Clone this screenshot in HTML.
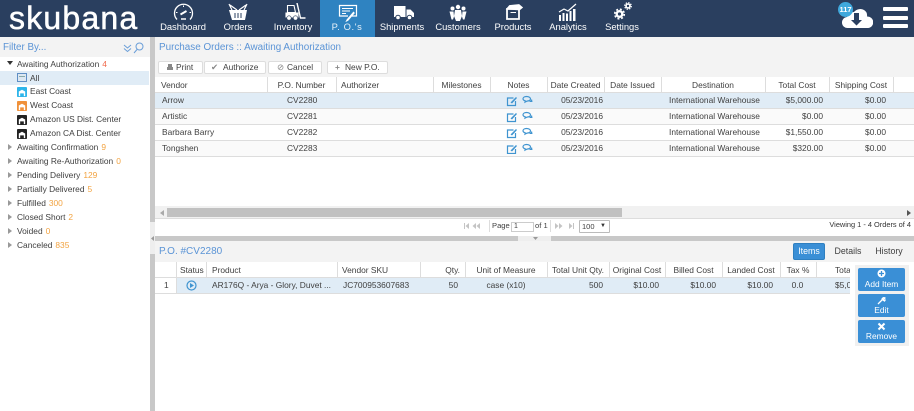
<!DOCTYPE html>
<html><head><meta charset="utf-8"><style>
html,body{margin:0;padding:0;width:914px;height:411px;overflow:hidden;background:#fff}
body{font-family:"Liberation Sans",sans-serif;font-size:8.4px;color:#404040;position:relative}
.a,.t,.c,.r,svg{position:absolute}
.t,.c,.r{white-space:nowrap;line-height:12px;height:12px}
.c{text-align:center}.r{text-align:right}
.nav{color:#fff;font-size:9.4px;text-align:center;width:60px;top:21px;position:absolute;line-height:12px}
.cnt{color:#f2a341;margin-left:3px}
.btn{position:absolute;top:61px;height:11px;background:#fff;border:1px solid #ddd;border-radius:2px;line-height:11px;color:#404040;white-space:nowrap}
.btn span{position:absolute}
.w{fill:#fff}
.act{position:absolute;left:858px;width:47px;height:23px;background:#3a8fd6;border-radius:2px;color:#fff;text-align:center;font-size:8.4px;line-height:10px}
.s{position:absolute;width:1px;background:#ddd}
</style></head><body>
<div class="a" style="left:0;top:0;width:914px;height:37px;background:#2a3f5f"></div>
<div class="t" style="left:9px;top:-2px;height:40px;line-height:40px;font-size:32px;color:#fff;letter-spacing:1.2px;-webkit-text-stroke:.5px #fff">skubana</div>
<div class="a" style="left:320px;top:0;width:55px;height:37px;background:#2f83c1"></div>

<svg style="left:173px;top:3px" width="21" height="18" viewBox="0 0 21 18" fill="none" stroke="#fff" stroke-width="1.3"><path d="M4 16.500A9 9 0 1 1 17 16.500"/><path d="M7.500 11.500l6-3.500" stroke-width="1.900"/><path d="M10.500 2.500v1.500M3 9.500h1.500M18 9.500h-1.500" stroke-width="1"/><path d="M8 16h5" stroke-width="1.500"/></svg>
<svg style="left:227px;top:3px" width="22" height="18" viewBox="0 0 22 18"><path d="M2 7h18l-2 10H5z" fill="#fff"/><path d="M5 7L2 1M17 7l3-6M3 2l7 5M19 2l-7 5" stroke="#fff" stroke-width="1.200" fill="none"/><path d="M8 10v5M11 10v5M14 10v5" stroke="#2a3f5f" stroke-width="1"/></svg>
<svg style="left:285px;top:3px" width="21" height="18" viewBox="0 0 21 18" fill="none" stroke="#fff" stroke-width="1.100"><path d="M2.500 2.500h6.500l1.500 7H2.500z"/><path d="M12 0l3.500 15h5" stroke-width="1.400"/><path d="M1 10h12v4H1z" fill="#fff"/><circle cx="4" cy="15" r="2.200" fill="#fff" stroke="#2a3f5f" stroke-width=".6"/><circle cx="10.500" cy="15" r="2.200" fill="#fff" stroke="#2a3f5f" stroke-width=".6"/></svg>
<svg style="left:338px;top:4px" width="20" height="18" viewBox="0 0 20 18" fill="none" stroke="#fff"><path d="M10 12H1.500V1.500h17V12H14" stroke-width="1.200"/><path d="M4 4.500h11M4 7h8M4 9.500h4" stroke-width="1"/><path d="M15.500 8L9 15.500l-1 2 2-1L16.500 9z" fill="#fff" stroke-width=".6"/></svg>
<svg style="left:394px;top:6px" width="20" height="14" viewBox="0 0 20 14"><path d="M0 0h11.500v11H0z" fill="#fff"/><path d="M12.500 3.500h4l3.500 3.500v4h-7.500z" fill="#fff"/><circle cx="4" cy="11.500" r="2.300" fill="#fff" stroke="#2a3f5f"/><circle cx="15.500" cy="11.500" r="2.300" fill="#fff" stroke="#2a3f5f"/></svg>
<svg style="left:449px;top:4px" width="18" height="17" viewBox="0 0 18 17" class="w"><circle cx="9" cy="3" r="2.200"/><circle cx="3.500" cy="4.500" r="2"/><circle cx="14.500" cy="4.500" r="2"/><path d="M6 6h6l1 6-2 5H7l-2-5zM.5 7.500h4l.5 5-1 3H2.500zM17.500 7.500h-4l-.5 5 1 3h1.500z"/></svg>
<svg style="left:504px;top:4px" width="20" height="16" viewBox="0 0 20 16" fill="none" stroke="#fff"><path d="M3 5h12v10H3z" stroke-width="1.800"/><path d="M2.500 5l3-3.500 9.500-1 3.500 3-3 2.500z" fill="#fff" stroke-width=".8"/><path d="M6.500 8.500h5.500" stroke-width="1"/></svg>
<svg style="left:558px;top:2px" width="20" height="19" viewBox="0 0 20 19"><path d="M1 10l5-3 4 2 8-7" fill="none" stroke="#fff" stroke-width="1.200"/><path d="M1 13h2v6H1zM4.500 11h2v8h-2zM8 11.500h2V19H8zM11.500 9h2v10h-2zM15 7h2.500v12H15z" class="w"/></svg>
<svg style="left:614px;top:1px" width="19" height="20" viewBox="0 0 19 20" fill="none" stroke="#fff"><circle cx="5.500" cy="13" r="2.800" stroke-width="2.400"/><circle cx="5.500" cy="13" r="4.800" stroke-width="1.600" stroke-dasharray="2 1.800"/><circle cx="14" cy="5" r="2" stroke-width="1.600"/><circle cx="14" cy="5" r="3.300" stroke-width="1.200" stroke-dasharray="1.400 1.200"/></svg>

<div class="nav" style="left:153px">Dashboard</div>
<div class="nav" style="left:208px">Orders</div>
<div class="nav" style="left:263px">Inventory</div>
<div class="nav" style="left:317px;letter-spacing:.6px;color:#e8f1f8">P. O.'s</div>
<div class="nav" style="left:372px">Shipments</div>
<div class="nav" style="left:428px">Customers</div>
<div class="nav" style="left:483px">Products</div>
<div class="nav" style="left:538px">Analytics</div>
<div class="nav" style="left:592px">Settings</div>

<svg style="left:842px;top:7px" width="31" height="22" viewBox="0 0 31 22"><path d="M6 21a5.500 5.500 0 0 1-1-11 7 7 0 0 1 7-5 8 8 0 0 1 10-2 6.500 6.500 0 0 1 3 6.500 5.500 5.500 0 0 1 1 11.500z" fill="#fff"/><path d="M12 6h5v7h3l-5.500 5.500L9 13h3z" fill="#2a3f5f"/></svg>
<div class="a" style="left:838px;top:2px;width:15px;height:15px;border-radius:8px;background:#3fa8dc;color:#fff;font-size:7.5px;line-height:15px;text-align:center;font-weight:bold">117</div>
<div class="a" style="left:883px;top:7px;width:25px;height:4px;background:#fff;border-radius:1px"></div>
<div class="a" style="left:883px;top:16px;width:25px;height:4px;background:#fff;border-radius:1px"></div>
<div class="a" style="left:883px;top:24px;width:25px;height:4px;background:#fff;border-radius:1px"></div>

<!-- sidebar -->
<div class="a" style="left:0;top:37px;width:150px;height:20px;background:#f3f3f3"></div>
<div class="t" style="left:3px;top:42px;color:#5b94d6;font-size:9.8px">Filter By...</div>
<svg style="left:123px;top:42px" width="22" height="12" viewBox="0 0 22 12" fill="none" stroke="#6a9ed8"><path d="M1 3l3.500 3L8 3M1 6.500l3.500 3L8 6.500"/><circle cx="16.500" cy="4.500" r="3.500"/><path d="M14 7.500L11 11"/></svg>
<div class="a" style="left:0;top:71px;width:149px;height:14px;background:#e0ecf6"></div>
<svg style="left:7px;top:61px" width="6" height="5" viewBox="0 0 6 5"><path d="M0 0h6L3 4z" fill="#333"/></svg>
<div class="t" style="left:17px;top:58px">Awaiting Authorization<span class="cnt" style="color:#f0684a">4</span></div>
<div class="a" style="left:17px;top:73px;width:8px;height:7px;border:1px solid #5f8fc5;background:#dde8f2"></div>
<div class="a" style="left:19px;top:76px;width:6px;height:1px;background:#8aa"></div>
<div class="t" style="left:30px;top:72px">All</div>
<svg style="left:17px;top:87px" width="10" height="10" viewBox="0 0 11 11"><rect width="11" height="11" rx="1" fill="#2db5ea"/><path d="M2 10V5l3.500-2L9 5v5H7.500V7h-4v3z" fill="#fff"/></svg>
<div class="t" style="left:30px;top:85px">East Coast</div>
<svg style="left:17px;top:101px" width="10" height="10" viewBox="0 0 11 11"><rect width="11" height="11" rx="1" fill="#f0913a"/><path d="M2 10V5l3.500-2L9 5v5H7.500V7h-4v3z" fill="#fff"/></svg>
<div class="t" style="left:30px;top:99px">West Coast</div>
<svg style="left:17px;top:115px" width="10" height="10" viewBox="0 0 11 11"><rect width="11" height="11" rx="1" fill="#222"/><path d="M2 10V5l3.500-2L9 5v5H7.500V7h-4v3z" fill="#fff"/></svg>
<div class="t" style="left:30px;top:113px">Amazon US Dist. Center</div>
<svg style="left:17px;top:129px" width="10" height="10" viewBox="0 0 11 11"><rect width="11" height="11" rx="1" fill="#222"/><path d="M2 10V5l3.500-2L9 5v5H7.500V7h-4v3z" fill="#fff"/></svg>
<div class="t" style="left:30px;top:127px">Amazon CA Dist. Center</div>

<svg style="left:8px;top:144px" width="4" height="6" viewBox="0 0 4 6"><path d="M0 0l4 3-4 3z" fill="#999"/></svg><div class="t" style="left:17px;top:141px">Awaiting Confirmation<span class="cnt">9</span></div>
<svg style="left:8px;top:158px" width="4" height="6" viewBox="0 0 4 6"><path d="M0 0l4 3-4 3z" fill="#999"/></svg><div class="t" style="left:17px;top:155px">Awaiting Re-Authorization<span class="cnt">0</span></div>
<svg style="left:8px;top:172px" width="4" height="6" viewBox="0 0 4 6"><path d="M0 0l4 3-4 3z" fill="#999"/></svg><div class="t" style="left:17px;top:169px">Pending Delivery<span class="cnt">129</span></div>
<svg style="left:8px;top:186px" width="4" height="6" viewBox="0 0 4 6"><path d="M0 0l4 3-4 3z" fill="#999"/></svg><div class="t" style="left:17px;top:183px">Partially Delivered<span class="cnt">5</span></div>
<svg style="left:8px;top:200px" width="4" height="6" viewBox="0 0 4 6"><path d="M0 0l4 3-4 3z" fill="#999"/></svg><div class="t" style="left:17px;top:197px">Fulfilled<span class="cnt">300</span></div>
<svg style="left:8px;top:214px" width="4" height="6" viewBox="0 0 4 6"><path d="M0 0l4 3-4 3z" fill="#999"/></svg><div class="t" style="left:17px;top:211px">Closed Short<span class="cnt">2</span></div>
<svg style="left:8px;top:228px" width="4" height="6" viewBox="0 0 4 6"><path d="M0 0l4 3-4 3z" fill="#999"/></svg><div class="t" style="left:17px;top:225px">Voided<span class="cnt">0</span></div>
<svg style="left:8px;top:242px" width="4" height="6" viewBox="0 0 4 6"><path d="M0 0l4 3-4 3z" fill="#999"/></svg><div class="t" style="left:17px;top:239px">Canceled<span class="cnt">835</span></div>

<div class="a" style="left:150px;top:37px;width:5px;height:374px;background:#c8c8c8"></div>
<div class="a" style="left:150px;top:222px;width:5px;height:32px;background:#eee"></div>
<svg style="left:151px;top:236px" width="3" height="5" viewBox="0 0 3 5"><path d="M3 0L0 2.500 3 5z" fill="#999"/></svg>

<!-- top panel -->
<div class="a" style="left:155px;top:37px;width:759px;height:40px;background:#f3f3f3"></div>
<div class="t" style="left:159px;top:42px;color:#5b94d6;font-size:9.9px">Purchase Orders :: Awaiting Authorization</div>
<div class="btn" style="left:158px;width:43px"><svg style="left:8px;top:2px" width="6" height="7" viewBox="0 0 6 7"><path d="M1 0h4v3H1zM0 3h6v3H0z" fill="#888"/></svg><span style="left:17px">Print</span></div>
<div class="btn" style="left:204px;width:60px"><span style="left:6px;color:#888">&#10004;</span><span style="left:18px">Authorize</span></div>
<div class="btn" style="left:268px;width:52px"><span style="left:8px;color:#888">&#8856;</span><span style="left:18px">Cancel</span></div>
<div class="btn" style="left:327px;width:59px"><span style="left:7px;color:#888;font-weight:bold">+</span><span style="left:17px">New P.O.</span></div>

<div class="a" style="left:155px;top:77px;width:759px;height:129px;background:#fff"></div>
<div class="a" style="left:155px;top:92px;width:759px;height:1px;background:#ddd"></div>
<div class="a" style="left:155px;top:93px;width:759px;height:15px;background:#e0ecf6"></div>
<div class="a" style="left:155px;top:108px;width:759px;height:1px;background:#ddd"></div>
<div class="a" style="left:155px;top:109px;width:759px;height:15px;background:#fafafa"></div>
<div class="a" style="left:155px;top:124px;width:759px;height:1px;background:#ddd"></div>
<div class="a" style="left:155px;top:140px;width:759px;height:1px;background:#ddd"></div>
<div class="a" style="left:155px;top:141px;width:759px;height:15px;background:#fafafa"></div>
<div class="a" style="left:155px;top:156px;width:759px;height:1px;background:#ddd"></div>
<div class="s" style="left:267px;top:77px;height:15px"></div><div class="s" style="left:336px;top:77px;height:15px"></div><div class="s" style="left:433px;top:77px;height:15px"></div><div class="s" style="left:490px;top:77px;height:15px"></div><div class="s" style="left:547px;top:77px;height:15px"></div><div class="s" style="left:604px;top:77px;height:15px"></div><div class="s" style="left:661px;top:77px;height:15px"></div><div class="s" style="left:765px;top:77px;height:15px"></div><div class="s" style="left:829px;top:77px;height:15px"></div><div class="s" style="left:893px;top:77px;height:15px"></div>

<div class="t" style="left:161px;top:79px">Vendor</div>
<div class="c" style="left:267px;width:69px;top:79px">P.O. Number</div>
<div class="t" style="left:341px;top:79px">Authorizer</div>
<div class="c" style="left:433px;width:57px;top:79px">Milestones</div>
<div class="c" style="left:490px;width:57px;top:79px">Notes</div>
<div class="c" style="left:547px;width:57px;top:79px">Date Created</div>
<div class="c" style="left:604px;width:57px;top:79px">Date Issued</div>
<div class="c" style="left:661px;width:104px;top:79px">Destination</div>
<div class="c" style="left:765px;width:64px;top:79px">Total Cost</div>
<div class="c" style="left:829px;width:64px;top:79px">Shipping Cost</div>

<div class="t" style="left:162px;top:94px">Arrow</div><div class="t" style="left:287px;top:94px">CV2280</div><div class="r" style="left:547px;width:56px;top:94px">05/23/2016</div><div class="t" style="left:669px;top:94px">International Warehouse</div><div class="r" style="left:765px;width:58px;top:94px">$5,000.00</div><div class="r" style="left:829px;width:57px;top:94px">$0.00</div>
<div class="t" style="left:162px;top:110px">Artistic</div><div class="t" style="left:287px;top:110px">CV2281</div><div class="r" style="left:547px;width:56px;top:110px">05/23/2016</div><div class="t" style="left:669px;top:110px">International Warehouse</div><div class="r" style="left:765px;width:58px;top:110px">$0.00</div><div class="r" style="left:829px;width:57px;top:110px">$0.00</div>
<div class="t" style="left:162px;top:126px">Barbara Barry</div><div class="t" style="left:287px;top:126px">CV2282</div><div class="r" style="left:547px;width:56px;top:126px">05/23/2016</div><div class="t" style="left:669px;top:126px">International Warehouse</div><div class="r" style="left:765px;width:58px;top:126px">$1,550.00</div><div class="r" style="left:829px;width:57px;top:126px">$0.00</div>
<div class="t" style="left:162px;top:142px">Tongshen</div><div class="t" style="left:287px;top:142px">CV2283</div><div class="r" style="left:547px;width:56px;top:142px">05/23/2016</div><div class="t" style="left:669px;top:142px">International Warehouse</div><div class="r" style="left:765px;width:58px;top:142px">$320.00</div><div class="r" style="left:829px;width:57px;top:142px">$0.00</div>

<svg style="left:506px;top:94px" width="28" height="60" viewBox="0 0 28 60" fill="none" stroke="#3f94d0">
<g><path d="M7.500 4H1.500v7.500h8V7" stroke-width="1.200"/><path d="M4.500 8.500L10 3l1 1-5 5.500z" fill="#3f94d0" stroke="none"/><path d="M20.500 2.500c2.500 0 4 1.100 4 2.300s-1.400 2.200-3.500 2.300l-2 1 .3-1.200c-1.400-.4-2.300-1.200-2.300-2.100 0-1.200 1.300-2.300 3.500-2.300z" stroke-width="1.200"/><path d="M23 8h3.500l-.5-3z" fill="#3f94d0" stroke="none"/></g>
<g transform="translate(0,16)"><path d="M7.500 4H1.500v7.500h8V7" stroke-width="1.200"/><path d="M4.500 8.500L10 3l1 1-5 5.500z" fill="#3f94d0" stroke="none"/><path d="M20.500 2.500c2.500 0 4 1.100 4 2.300s-1.400 2.200-3.500 2.300l-2 1 .3-1.200c-1.400-.4-2.300-1.200-2.300-2.100 0-1.200 1.300-2.300 3.500-2.300z" stroke-width="1.200"/><path d="M23 8h3.500l-.5-3z" fill="#3f94d0" stroke="none"/></g>
<g transform="translate(0,32)"><path d="M7.500 4H1.500v7.500h8V7" stroke-width="1.200"/><path d="M4.500 8.500L10 3l1 1-5 5.500z" fill="#3f94d0" stroke="none"/><path d="M20.500 2.500c2.500 0 4 1.100 4 2.300s-1.400 2.200-3.500 2.300l-2 1 .3-1.200c-1.400-.4-2.300-1.200-2.300-2.100 0-1.200 1.300-2.300 3.500-2.300z" stroke-width="1.200"/><path d="M23 8h3.500l-.5-3z" fill="#3f94d0" stroke="none"/></g>
<g transform="translate(0,48)"><path d="M7.500 4H1.500v7.500h8V7" stroke-width="1.200"/><path d="M4.500 8.500L10 3l1 1-5 5.500z" fill="#3f94d0" stroke="none"/><path d="M20.500 2.500c2.500 0 4 1.100 4 2.300s-1.400 2.200-3.500 2.300l-2 1 .3-1.200c-1.400-.4-2.300-1.200-2.300-2.100 0-1.200 1.300-2.300 3.500-2.300z" stroke-width="1.200"/><path d="M23 8h3.500l-.5-3z" fill="#3f94d0" stroke="none"/></g>
</svg>

<!-- scrollbar -->
<div class="a" style="left:155px;top:206px;width:759px;height:12px;background:#f1f1f1"></div>
<div class="a" style="left:167px;top:208px;width:455px;height:9px;background:#c1c1c1"></div>
<svg style="left:160px;top:210px" width="4" height="6" viewBox="0 0 4 6"><path d="M4 0L0 3l4 3z" fill="#aaa"/></svg>
<svg style="left:907px;top:210px" width="4" height="6" viewBox="0 0 4 6"><path d="M0 0l4 3-4 3z" fill="#555"/></svg>
<div class="a" style="left:155px;top:218px;width:759px;height:1px;background:#ddd"></div>

<!-- pager -->
<div class="a" style="left:155px;top:219px;width:759px;height:17px;background:#fff"></div>
<svg style="left:464px;top:223px" width="20" height="6" viewBox="0 0 20 6" fill="#c4c4c4"><path d="M0 0h1v6H0zM5 0v6L1.500 3zM12 0v6L8.500 3zM16 0v6l-3.500-3z"/></svg>
<div class="a" style="left:489px;top:220px;width:1px;height:12px;background:#ddd"></div>
<div class="t" style="left:492px;top:220px;font-size:7.6px">Page</div>
<div class="a" style="left:511px;top:222px;width:19px;height:8px;border:1px solid #ccc;font-size:7px;line-height:8px;padding-left:2px">1</div>
<div class="t" style="left:535px;top:220px;font-size:7.6px">of 1</div>
<div class="a" style="left:550px;top:220px;width:1px;height:12px;background:#ddd"></div>
<svg style="left:555px;top:223px" width="20" height="6" viewBox="0 0 20 6" fill="#c4c4c4"><path d="M0 0v6l3.500-3zM4 0v6l3.500-3zM14 0v6l3.500-3zM18 0h1v6h-1z"/></svg>
<div class="a" style="left:579px;top:220px;width:27px;height:11px;border:1px solid #bbb;border-radius:1px;font-size:7.5px;line-height:11px;padding-left:2px">100<span style="position:absolute;right:3px;font-size:6px;color:#333">&#9660;</span></div>
<div class="r" style="left:780px;width:131px;top:219px;color:#333;font-size:7.4px">Viewing 1 - 4 Orders of 4</div>

<!-- splitter -->
<div class="a" style="left:155px;top:236px;width:759px;height:5px;background:#c8c8c8"></div>
<div class="a" style="left:518px;top:236px;width:33px;height:5px;background:#eee"></div>
<svg style="left:533px;top:237px" width="5" height="3" viewBox="0 0 5 3"><path d="M0 0h5L2.500 3z" fill="#999"/></svg>

<!-- lower -->
<div class="a" style="left:155px;top:241px;width:759px;height:21px;background:#f3f3f3"></div>
<div class="t" style="left:159px;top:246px;color:#5b94d6;font-size:10px">P.O. #CV2280</div>
<div class="a" style="left:793px;top:243px;width:32px;height:17px;background:#3a8fd6;border:1px solid #2e7fc0;box-sizing:border-box;border-radius:2px;color:#fff;font-size:8.8px;line-height:15px;text-align:center">Items</div>
<div class="c" style="left:829px;width:38px;top:245px;font-size:8.8px">Details</div>
<div class="c" style="left:870px;width:38px;top:245px;font-size:8.8px">History</div>

<div class="a" style="left:155px;top:277px;width:695px;height:1px;background:#ddd"></div>
<div class="a" style="left:176px;top:278px;width:674px;height:15px;background:#e0ecf6"></div>
<div class="a" style="left:155px;top:293px;width:695px;height:1px;background:#ddd"></div>
<div class="s" style="left:176px;top:262px;height:31px"></div><div class="s" style="left:206px;top:262px;height:15px"></div><div class="s" style="left:337px;top:262px;height:15px"></div><div class="s" style="left:420px;top:262px;height:15px"></div><div class="s" style="left:465px;top:262px;height:15px"></div><div class="s" style="left:547px;top:262px;height:15px"></div><div class="s" style="left:609px;top:262px;height:15px"></div><div class="s" style="left:665px;top:262px;height:15px"></div><div class="s" style="left:722px;top:262px;height:15px"></div><div class="s" style="left:780px;top:262px;height:15px"></div><div class="s" style="left:816px;top:262px;height:15px"></div>
<div class="t" style="left:180px;top:264px">Status</div>
<div class="t" style="left:212px;top:264px">Product</div>
<div class="t" style="left:342px;top:264px">Vendor SKU</div>
<div class="r" style="left:420px;width:40px;top:264px">Qty.</div>
<div class="c" style="left:465px;width:82px;top:264px">Unit of Measure</div>
<div class="c" style="left:547px;width:62px;top:264px">Total Unit Qty.</div>
<div class="c" style="left:609px;width:56px;top:264px">Original Cost</div>
<div class="c" style="left:665px;width:57px;top:264px">Billed Cost</div>
<div class="c" style="left:722px;width:58px;top:264px">Landed Cost</div>
<div class="c" style="left:780px;width:36px;top:264px">Tax %</div>
<div class="t" style="left:835px;top:264px;width:15px;overflow:hidden">Total</div>

<div class="t" style="left:164px;top:279px">1</div>
<svg style="left:186px;top:280px" width="11" height="11" viewBox="0 0 11 11"><circle cx="5.500" cy="5.500" r="4.500" fill="none" stroke="#3f94d0" stroke-width="1.200"/><path d="M4 3l4 2.500L4 8z" fill="#3f94d0"/></svg>
<div class="t" style="left:212px;top:279px">AR176Q - Arya - Glory, Duvet ...</div>
<div class="t" style="left:343px;top:279px">JC700953607683</div>
<div class="r" style="left:420px;width:38px;top:279px">50</div>
<div class="c" style="left:465px;width:82px;top:279px">case (x10)</div>
<div class="r" style="left:547px;width:56px;top:279px">500</div>
<div class="r" style="left:609px;width:50px;top:279px">$10.00</div>
<div class="r" style="left:665px;width:51px;top:279px">$10.00</div>
<div class="r" style="left:722px;width:51px;top:279px">$10.00</div>
<div class="c" style="left:780px;width:35px;top:279px">0.0</div>
<div class="t" style="left:835px;top:279px;width:15px;overflow:hidden">$5,000.00</div>

<div class="a" style="left:855px;top:265px;width:54px;height:81px;background:#f0f0f0"></div>
<div class="act" style="top:268px"><svg style="left:19px;top:1px" width="9" height="9" viewBox="0 0 9 9"><circle cx="4.500" cy="4.500" r="4" fill="#fff"/><path d="M4.500 2v5M2 4.500h5" stroke="#3a8fd6" stroke-width="1.300"/></svg><div style="position:absolute;left:0;right:0;top:11px;line-height:11px">Add Item</div></div>
<div class="act" style="top:294px"><svg style="left:19px;top:2px" width="9" height="9" viewBox="0 0 9 9"><path d="M1 8l4-4a2 2 0 0 1 3-2L6 4l1.500 1 1-1.500" fill="none" stroke="#fff" stroke-width="1.300"/></svg><div style="position:absolute;left:0;right:0;top:11px;line-height:11px">Edit</div></div>
<div class="act" style="top:320px"><svg style="left:19px;top:2px" width="9" height="9" viewBox="0 0 9 9"><path d="M1.500 1.500l6 6M7.500 1.500l-6 6" stroke="#fff" stroke-width="2"/></svg><div style="position:absolute;left:0;right:0;top:11px;line-height:11px">Remove</div></div>
</body></html>
